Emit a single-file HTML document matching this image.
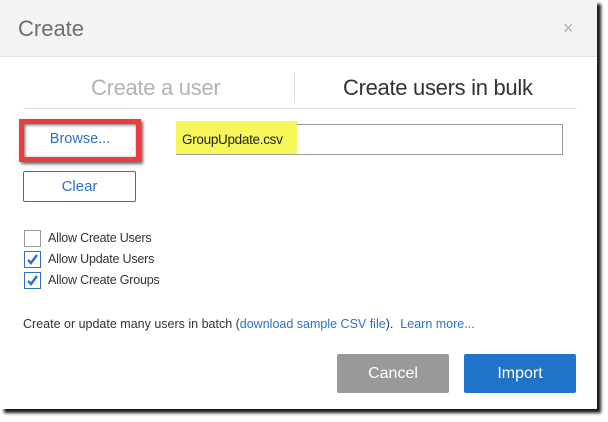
<!DOCTYPE html>
<html><head><style>
*{margin:0;padding:0;box-sizing:border-box}
body{width:608px;height:422px;background:#fff;font-family:"Liberation Sans",sans-serif;position:relative;overflow:hidden}
.dlg{position:absolute;left:0;top:0;width:597px;height:409px;background:#fff;box-shadow:4px 4px 3px rgba(0,0,0,.9)}
.hdr{position:absolute;left:0;top:0;width:597px;height:57px;background:#f3f3f3;border-bottom:1px solid #e2e2e2}
.a{position:absolute;white-space:nowrap}
.cb{position:absolute;left:24px;width:17px;height:17px;border:1px solid #999;background:#fff}
.cb.on{border:1px solid #2d6fc9}
.lbl{position:absolute;left:48px;font-size:12.5px;color:#333;letter-spacing:-0.2px}
.btn{position:absolute;color:#fff;font-size:16px;text-align:center;border-radius:2px}
</style></head><body>
<div class="dlg">
<div class="hdr"></div>
<div class="a" style="left:18px;top:16px;font-size:22px;color:#6e6e6e">Create</div>
<div class="a" style="left:563px;top:18px;font-size:18px;color:#b0b0b0">×</div>
<div class="a" style="left:91px;top:75px;font-size:22px;color:#b3b3b3;letter-spacing:-0.3px">Create a user</div>
<div class="a" style="left:294px;top:72px;width:1px;height:31px;background:#e0e0e0"></div>
<div class="a" style="left:343px;top:75px;font-size:22px;color:#333;letter-spacing:-0.3px">Create users in bulk</div>
<div class="a" style="left:23px;top:108px;width:554px;height:1px;background:#e0e0e0"></div>
<div class="a" style="left:19px;top:119px;width:122px;height:43px;border:5px solid #ec3c40;box-shadow:2px 2px 3px rgba(0,0,0,.6), inset 1px 1px 3px rgba(0,0,0,.6);background:#fff"></div>
<div class="a" style="left:19px;top:131px;width:122px;text-align:center;font-size:14.5px;color:#2d6fc9">Browse...</div>
<div class="a" style="left:176px;top:124px;width:387px;height:31px;border:1px solid #999"></div>
<div class="a" style="left:176px;top:121px;width:121px;height:33px;background:#f7f75a"></div>
<div class="a" style="left:182px;top:132px;font-size:13.5px;color:#222;letter-spacing:-0.3px">GroupUpdate.csv</div>
<div class="a" style="left:23px;top:171px;width:113px;height:31px;border:1px solid #2d6fc9;border-radius:2px;text-align:center;line-height:30px;font-size:15px;color:#2d6fc9">Clear</div>
<div class="cb" style="top:230px"></div>
<div class="cb on" style="top:251px"><svg width="15" height="15" viewBox="0 0 15 15"><path d="M3 8 L6 11 L12 3" stroke="#2d6fc9" stroke-width="2.4" fill="none"/></svg></div>
<div class="cb on" style="top:272px"><svg width="15" height="15" viewBox="0 0 15 15"><path d="M3 8 L6 11 L12 3" stroke="#2d6fc9" stroke-width="2.4" fill="none"/></svg></div>
<div class="lbl" style="top:231px">Allow Create Users</div>
<div class="lbl" style="top:252px">Allow Update Users</div>
<div class="lbl" style="top:273px">Allow Create Groups</div>
<div class="a" style="left:23px;top:317px;font-size:12.5px;color:#333">Create or update many users in batch (<span style="color:#2d6fc9">download sample CSV file</span>).&nbsp; <span style="color:#2d6fc9">Learn more...</span></div>
<div class="btn" style="left:337px;top:354px;width:112px;height:39px;line-height:39px;background:#999">Cancel</div>
<div class="btn" style="left:464px;top:354px;width:112px;height:39px;line-height:39px;background:#1f73c8">Import</div>
</div>
</body></html>
